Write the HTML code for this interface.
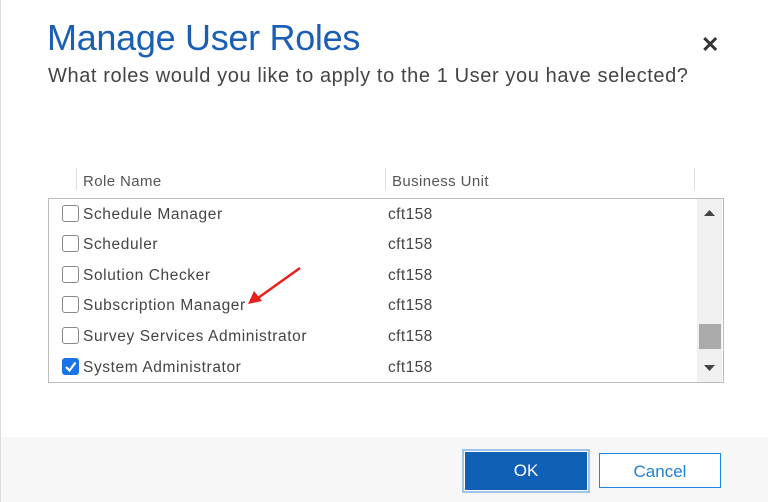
<!DOCTYPE html>
<html><head><style>
body{margin:0;width:768px;height:502px;position:relative;background:#fff;font-family:"Liberation Sans",sans-serif;overflow:hidden}
.lb{position:absolute;left:0;top:0;width:1px;height:502px;background:#ddd}
.t{position:absolute;left:47px;top:17px;font-size:36px;color:#1a5fb4;white-space:nowrap;letter-spacing:-0.3px}
.s{position:absolute;left:48px;top:65px;font-size:20px;color:#444;white-space:nowrap;letter-spacing:0.6px}
.x{position:absolute;left:701px;top:32px;font-size:22px;color:#333;font-weight:bold}
.h{position:absolute;top:173px;font-size:15px;color:#555;letter-spacing:0.4px}
.sep{position:absolute;top:168px;width:1px;height:22px;background:#ddd}
.box{position:absolute;left:48px;top:198px;width:674px;height:183px;border:1px solid #bbb}
.sb{position:absolute;left:697px;top:199px;width:25px;height:183px;background:#f0f0f0}
.th{position:absolute;left:699px;top:324px;width:22px;height:25px;background:#aaa}
.r{position:absolute;left:83px;font-size:15.5px;color:#444;white-space:nowrap;letter-spacing:0.6px}
.b{position:absolute;left:388px;font-size:15.5px;color:#444;letter-spacing:0.4px}
.cb{position:absolute;left:62px;width:15px;height:15px;border:1px solid #888;border-radius:3px;background:#fff}
.ft{position:absolute;left:1px;top:437px;width:767px;height:65px;background:#f7f7f7}
.ok{position:absolute;left:462px;top:449px;width:124px;height:40px;border:2px solid #9fc3ea;background:#fff}
.ok div{position:absolute;left:1px;top:1px;right:1px;bottom:1px;background:#1160b8;color:#fff;font-size:17px;text-align:center;line-height:38px}
.cn{position:absolute;left:599px;top:453px;width:120px;height:33px;border:1px solid #1e88e5;background:#fff;color:#1e7fd6;font-size:17px;text-align:center;line-height:35px}
</style></head><body>
<div class="lb"></div>
<div class="t">Manage User Roles</div>
<div class="s">What roles would you like to apply to the 1 User you have selected?</div>
<div class="x">✕</div>
<div class="sep" style="left:76px"></div><div class="sep" style="left:385px"></div><div class="sep" style="left:694px"></div>
<div class="h" style="left:83px">Role Name</div>
<div class="h" style="left:392px">Business Unit</div>
<div class="box"></div>
<div class="sb"><svg width="25" height="183" style="position:absolute;left:0;top:0"><path d="M7 17 L12.5 11 L18 17Z" fill="#444"/><path d="M7 166 L12.5 172 L18 166Z" fill="#444"/></svg></div>
<div class="th"></div>
<div class="cb" style="top:205px"></div><div class="r" style="top:206px">Schedule Manager</div><div class="b" style="top:206px">cft158</div>
<div class="cb" style="top:235px"></div><div class="r" style="top:236px">Scheduler</div><div class="b" style="top:236px">cft158</div>
<div class="cb" style="top:266px"></div><div class="r" style="top:267px">Solution Checker</div><div class="b" style="top:267px">cft158</div>
<div class="cb" style="top:296px"></div><div class="r" style="top:297px">Subscription Manager</div><div class="b" style="top:297px">cft158</div>
<div class="cb" style="top:327px"></div><div class="r" style="top:328px">Survey Services Administrator</div><div class="b" style="top:328px">cft158</div>
<div class="cb" style="top:358px;background:#1a73e8;border-color:#1a73e8"><svg width="15" height="15" style="position:absolute;left:0;top:0"><path d="M3 8 L6.5 11.5 L12.5 3.5" stroke="#fff" stroke-width="2.2" fill="none"/></svg></div><div class="r" style="top:359px">System Administrator</div><div class="b" style="top:359px">cft158</div>
<svg width="768" height="502" style="position:absolute;left:0;top:0"><path d="M300 268 L258 298" stroke="#e8201c" stroke-width="2.5"/><path d="M248 304 L254 291 L262 301Z" fill="#e8201c"/></svg>
<div class="ft"></div>
<div class="ok"><div>OK</div></div>
<div class="cn">Cancel</div>
</body></html>
